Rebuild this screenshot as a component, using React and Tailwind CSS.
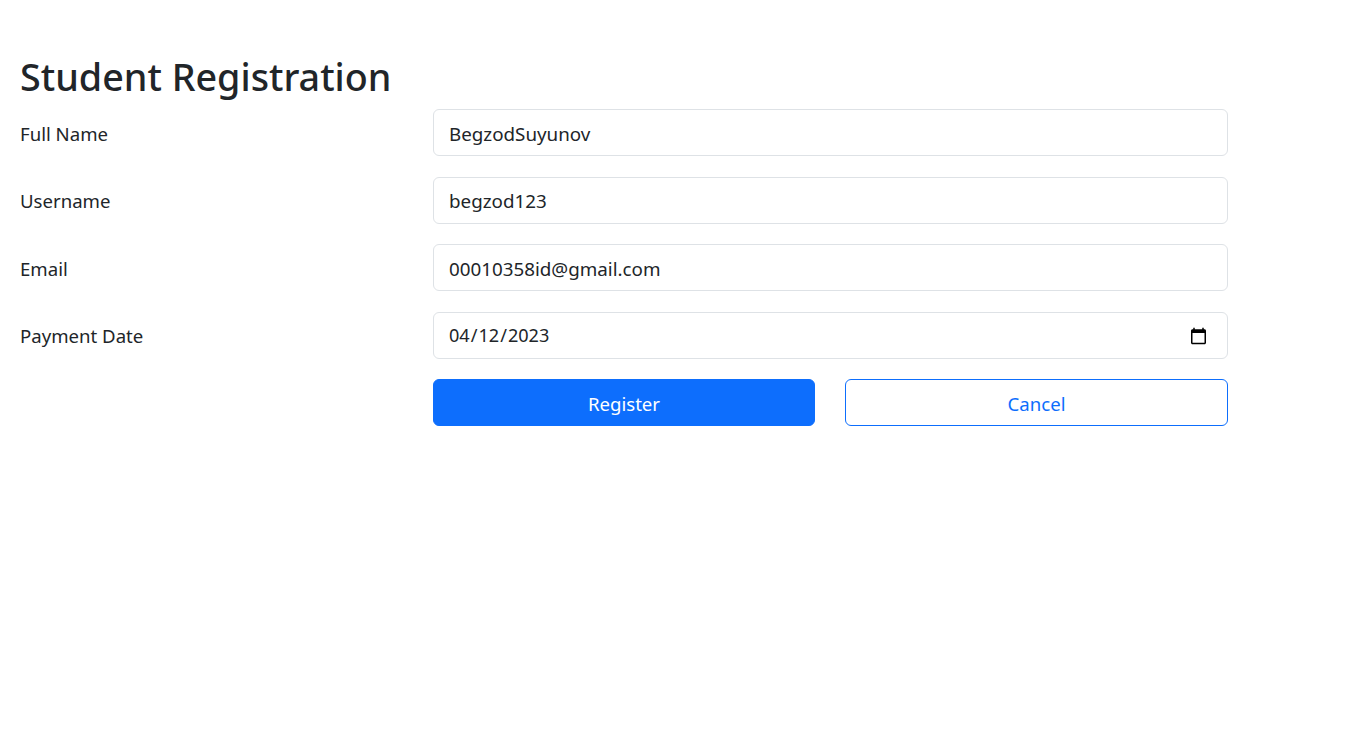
const FONT = "font-['Noto_Sans','Open_Sans',sans-serif]";

function Field({ label, value, type = "text", labelClass = "pt-[9px]", inputClass = "pl-[15px]", rowClass = "mb-[20.5px]" }) {
  return (
    <div className={`flex ${rowClass}`}>
      <label className={`w-[413px] text-[18.6px] leading-[29px] text-[#212529] ${labelClass}`}>{label}</label>
      <input
        type={type}
        defaultValue={value}
        className={`w-[795px] h-[47px] pt-[2px] pr-[17px] rounded-[6px] border border-[#dee2e6] bg-white text-[18.8px] text-[#212529] outline-none ${inputClass}`}
      />
    </div>
  );
}

export default function App() {
  return (
    <div className={`min-h-[744px] bg-white pl-5 pt-[50px] ${FONT}`}>
      <h1 className="text-[37.7px] leading-[54px] font-medium text-[#212529] mb-[5px]">Student Registration</h1>
      <Field label="Full Name" value="BegzodSuyunov" labelClass="pt-[10px]" />
      <Field label="Username" value="begzod123" />
      <Field label="Email" value="00010358id@gmail.com" labelClass="pt-[10px]" />
      <Field
        label="Payment Date"
        type="date"
        value="2023-04-12"
        rowClass="mb-5"
        inputClass="pl-[14px] [&::-webkit-datetime-edit]:text-[18.1px]"
      />
      <div className="flex pl-[413px]">
        <div className="flex w-[795px] gap-[30px]">
          <button type="button" className="w-[382px] h-[47px] pt-[3px] rounded-[6px] bg-[#0d6efd] border border-[#0d6efd] text-white text-[18.6px]">Register</button>
          <button type="button" className="w-[383px] h-[47px] pt-[3px] rounded-[6px] bg-white border border-[#0d6efd] text-[#0d6efd] text-[18.6px]">Cancel</button>
        </div>
      </div>
    </div>
  );
}
